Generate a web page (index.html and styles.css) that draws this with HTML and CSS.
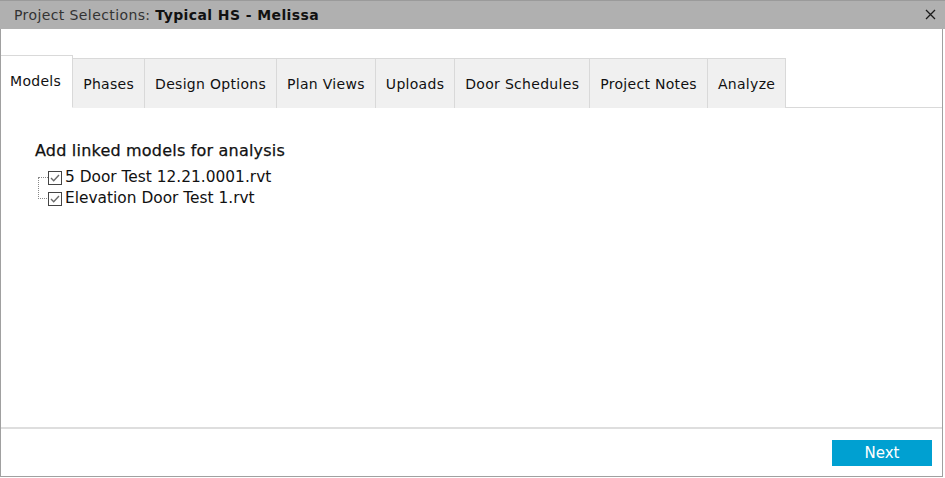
FILE: index.html
```html
<!DOCTYPE html>
<html>
<head>
<meta charset="utf-8">
<link rel="stylesheet" href="styles.css">
</head>
<body>
<div class="window">
  <div class="titlebar">
    <div class="title"><span class="title-label">Project Selections:</span> <span class="title-name">Typical HS - Melissa</span></div>
    <div class="close">
      <svg width="11" height="11" viewBox="0 0 11 11"><path d="M1 1 L10 10 M10 1 L1 10" stroke="#1a1a1a" stroke-width="1.3" fill="none"/></svg>
    </div>
  </div>
  <div class="body">
    <div class="tabs">
      <div class="tab active">Models</div>
      <div class="tab">Phases</div>
      <div class="tab">Design Options</div>
      <div class="tab">Plan Views</div>
      <div class="tab">Uploads</div>
      <div class="tab">Door Schedules</div>
      <div class="tab">Project Notes</div>
      <div class="tab">Analyze</div>
    </div>
    <div class="content">
      <div class="heading">Add linked models for analysis</div>
      <div class="tree">
        <div class="tree-item first">
          <span class="connector"></span>
          <span class="checkbox"><svg width="12" height="12" viewBox="0 0 12 12"><path d="M2 6 L4.7 8.7 L10 3" stroke="#6b6b6b" stroke-width="1.4" fill="none"/></svg></span>
          <span class="label">5 Door Test 12.21.0001.rvt</span>
        </div>
        <div class="tree-item last">
          <span class="connector"></span>
          <span class="checkbox"><svg width="12" height="12" viewBox="0 0 12 12"><path d="M2 6 L4.7 8.7 L10 3" stroke="#6b6b6b" stroke-width="1.4" fill="none"/></svg></span>
          <span class="label">Elevation Door Test 1.rvt</span>
        </div>
      </div>
    </div>
    <div class="footer">
      <button class="next">Next</button>
    </div>
  </div>
</div>
</body>
</html>
```

FILE: styles.css
```css
html, body {
  margin: 0;
  padding: 0;
  background: #ffffff;
}
body {
  font-family: "DejaVu Sans", Verdana, sans-serif;
  color: #111;
  width: 945px;
  height: 478px;
  overflow: hidden;
}
.window {
  width: 945px;
  height: 477px;
  display: flex;
  flex-direction: column;
}
.titlebar {
  height: 29px;
  background: #b0b0b0;
  border-top: 1px solid #9a9a9a;
  box-sizing: border-box;
  display: flex;
  align-items: center;
  justify-content: space-between;
  padding: 0 9px 0 14px;
}
.title {
  font-size: 14px;
  letter-spacing: 0.4px;
  color: #222;
}
.title-label {
  color: #333;
}
.title-name {
  font-weight: bold;
  color: #111;
}
.close {
  display: flex;
  align-items: center;
  margin-top: -2px;
}
.body {
  flex: 1;
  width: 943px;
  box-sizing: border-box;
  border-left: 1px solid #a0a0a0;
  border-right: 1px solid #a0a0a0;
  border-bottom: 1px solid #a0a0a0;
  display: flex;
  flex-direction: column;
}
.tabs {
  margin-top: 27px;
  display: flex;
  align-items: flex-end;
  border-bottom: 1px solid #d9d9d9;
  height: 51px;
}
.tab {
  height: 50px;
  box-sizing: border-box;
  padding: 0 10px;
  background: #f0f0f0;
  border-top: 1px solid #d9d9d9;
  border-right: 1px solid #d9d9d9;
  display: flex;
  align-items: center;
  font-size: 14px;
  letter-spacing: 0.3px;
  color: #111;
  margin-bottom: -1px;
}
.tab.active {
  background: #ffffff;
  height: 53px;
  padding: 0 11px 2px 9px;
  border-bottom: 1px solid #ffffff;
  border-top: 1px solid #d9d9d9;
}
.content {
  flex: 1;
  padding: 33px 0 0 34px;
}
.heading {
  font-size: 16px;
  letter-spacing: 0.2px;
  color: #111;
  -webkit-text-stroke: 0.25px #111;
  line-height: 20px;
  margin-bottom: 6px;
}
.tree {
  display: flex;
  flex-direction: column;
}
.tree-item {
  position: relative;
  display: flex;
  align-items: center;
  height: 21px;
  padding-left: 12px;
}
.connector {
  position: absolute;
  left: 3px;
  top: 10px;
  width: 9px;
  border-top: 1px dotted #888;
}
.tree-item.first .connector {
  height: 21px;
  border-left: 1px dotted #888;
}
.checkbox {
  width: 12px;
  height: 12px;
  border: 1px solid #444;
  background: #fff;
  display: flex;
  align-items: center;
  justify-content: center;
  margin-left: 1px;
}
.label {
  font-size: 15.4px;
  color: #111;
  margin-left: 3px;
  line-height: 21px;
}
.footer {
  height: 49px;
  border-top: 2px solid #dedede;
  display: flex;
  justify-content: flex-end;
  align-items: flex-start;
  padding: 11px 10px 0 0;
  box-sizing: border-box;
}
.next {
  width: 100px;
  height: 26px;
  background: #00a0d1;
  color: #ffffff;
  border: none;
  font-family: "DejaVu Sans", Verdana, sans-serif;
  font-size: 15px;
  padding: 0;
}
```
